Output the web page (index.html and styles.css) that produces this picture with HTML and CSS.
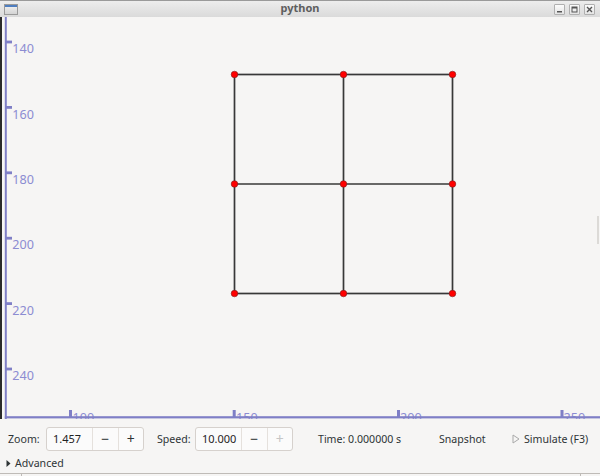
FILE: index.html
```html
<!DOCTYPE html>
<html>
<head>
<meta charset="utf-8">
<link rel="stylesheet" href="styles.css">
</head>
<body>
<div class="window">
  <header class="titlebar">
    <div class="tb-left">
      <span class="app-icon"><span class="app-icon-bar"></span></span>
    </div>
    <div class="title">python</div>
    <div class="tb-right">
      <span class="wm-btn"><svg width="7" height="7" viewBox="0 0 7 7"><rect x="1" y="5" width="5" height="1.5" fill="#555"/></svg></span>
      <span class="wm-btn"><svg width="7" height="7" viewBox="0 0 7 7"><rect x="1" y="1" width="5" height="5" fill="none" stroke="#555" stroke-width="1"/><rect x="1" y="1" width="5" height="1.5" fill="#555"/></svg></span>
      <span class="wm-btn"><svg width="7" height="7" viewBox="0 0 7 7"><path d="M1 1 L6 6 M6 1 L1 6" stroke="#555" stroke-width="1.4"/></svg></span>
    </div>
  </header>

  <main class="plot">
    <svg class="plot-svg" width="598" height="402" viewBox="2 17 598 402">
      <rect x="2" y="17" width="598" height="402" fill="#f6f5f4"/>
      <g class="yticks" fill="#7f7fc6">
        <rect x="6" y="40.6" width="6" height="2.8"/>
        <rect x="6" y="106" width="6" height="2.8"/>
        <rect x="6" y="171.4" width="6" height="2.8"/>
        <rect x="6" y="236.8" width="6" height="2.8"/>
        <rect x="6" y="302.2" width="6" height="2.8"/>
        <rect x="6" y="367.6" width="6" height="2.8"/>
      </g>
      <g class="axis-label">
        <text x="12.3" y="53.2">140</text>
        <text x="12.3" y="118.6">160</text>
        <text x="12.3" y="184">180</text>
        <text x="12.3" y="249.4">200</text>
        <text x="12.3" y="314.8">220</text>
        <text x="12.3" y="380.2">240</text>
      </g>
      <g class="axis-label">
        <text x="72.5" y="421.5">100</text>
        <text x="236" y="421.5">150</text>
        <text x="400" y="421.5">200</text>
        <text x="563.5" y="421.5">250</text>
      </g>
      <g fill="#7f7fc6">
        <rect x="69" y="410" width="3" height="7"/>
        <rect x="232.7" y="410" width="3" height="7"/>
        <rect x="397" y="410" width="3" height="7"/>
        <rect x="560.5" y="410" width="3" height="7"/>
      </g>
      <rect x="4.8" y="17" width="2" height="402" fill="#7f7fc6"/>
      <rect x="4.8" y="416.2" width="596" height="2.2" fill="#7f7fc6"/>

      <g stroke="#383838" stroke-width="1.7" fill="none">
        <rect x="234.5" y="74.5" width="218" height="219"/>
        <line x1="343.5" y1="74.5" x2="343.5" y2="293.5"/>
        <line x1="234.5" y1="184" x2="452.5" y2="184"/>
      </g>
      <g fill="#ff0000" stroke="#7a2020" stroke-width="0.6">
        <circle cx="234.5" cy="74.5" r="3.3"/>
        <circle cx="343.5" cy="74.5" r="3.3"/>
        <circle cx="452.5" cy="74.5" r="3.3"/>
        <circle cx="234.5" cy="184" r="3.3"/>
        <circle cx="343.5" cy="184" r="3.3"/>
        <circle cx="452.5" cy="184" r="3.3"/>
        <circle cx="234.5" cy="293.5" r="3.3"/>
        <circle cx="343.5" cy="293.5" r="3.3"/>
        <circle cx="452.5" cy="293.5" r="3.3"/>
      </g>
    </svg>
    <div class="scroll-hint"></div>
  </main>

  <div class="toolbar">
    <span class="lbl lbl-zoom">Zoom:</span>
    <div class="spin">
      <span class="spin-entry">1.457</span>
      <span class="spin-btn">−</span>
      <span class="spin-btn">+</span>
    </div>
    <span class="lbl lbl-speed">Speed:</span>
    <div class="spin">
      <span class="spin-entry">10.000</span>
      <span class="spin-btn">−</span>
      <span class="spin-btn disabled">+</span>
    </div>
    <span class="lbl lbl-time">Time: 0.000000 s</span>
    <span class="lbl lbl-snap">Snapshot</span>
    <span class="lbl lbl-sim"><svg class="play" width="8" height="10" viewBox="0 0 8 10"><path d="M1 1 L7 5 L1 9 Z" fill="none" stroke="#a9a9a9" stroke-width="1"/></svg>Simulate (F3)</span>
  </div>

  <div class="advanced">
    <svg class="expander" width="5" height="7" viewBox="0 0 5 7"><path d="M0.5 0 L4.5 3.5 L0.5 7 Z" fill="#2e3436"/></svg>
    <span>Advanced</span>
  </div>

  <div class="bottom-strip">
    <span class="seg seg-a"></span>
    <span class="seg seg-b"></span>
  </div>
</div>
</body>
</html>
```

FILE: styles.css
```css
html, body {
  margin: 0;
  padding: 0;
  background: #f6f5f4;
}

body {
  width: 600px;
  height: 476px;
  overflow: hidden;
  font-family: "Noto Sans", "DejaVu Sans", sans-serif;
  color: #2e3436;
}

.window {
  width: 600px;
  height: 476px;
  display: flex;
  flex-direction: column;
  background: #f6f5f4;
}

/* title bar */
.titlebar {
  height: 16px;
  flex: none;
  display: grid;
  grid-template-columns: 1fr auto 1fr;
  align-items: center;
  background: linear-gradient(#ededed, #dadada);
  border-top: 1px solid #9a9a9a;
  box-sizing: content-box;
}

.tb-left {
  display: flex;
  align-items: center;
  padding-left: 4px;
}

.app-icon {
  width: 12px;
  height: 9px;
  border: 1px solid #9a9a9a;
  background: linear-gradient(#f2f2f2, #d4d4d4);
  display: flex;
  flex-direction: column;
  box-sizing: content-box;
}

.app-icon-bar {
  height: 2px;
  background: #4e7ec0;
}

.title {
  font-weight: bold;
  font-size: 11px;
  color: #5e5e5e;
  line-height: 16px;
  transform: translateY(-1px);
}

.tb-right {
  display: flex;
  justify-content: flex-end;
  gap: 4px;
  padding-right: 5px;
}

.wm-btn {
  width: 9px;
  height: 9px;
  border: 1px solid #b0b0b0;
  border-radius: 1px;
  background: linear-gradient(#fbfbfb, #e4e4e4);
  display: flex;
  align-items: center;
  justify-content: center;
}

/* plot */
.plot {
  position: relative;
  height: 402px;
  flex: none;
  border-left: 2px solid #2a2a2a;
}

.plot-svg {
  display: block;
}

.axis-label {
  font-family: "Noto Sans", "DejaVu Sans", sans-serif;
  font-size: 12.6px;
  fill: #8c8cd2;
}

.scroll-hint {
  position: absolute;
  right: 1px;
  top: 199px;
  width: 2px;
  height: 28px;
  background: #dcdad7;
}

/* toolbar */
.toolbar {
  height: 34px;
  flex: none;
  display: flex;
  align-items: flex-start;
  padding-top: 8px;
  box-sizing: border-box;
  font-size: 10.6px;
}

.lbl {
  line-height: 24px;
  white-space: nowrap;
  flex: none;
}

.lbl-zoom { margin-left: 8px; width: 38px; }
.lbl-speed { margin-left: 13px; width: 38px; }
.lbl-time { margin-left: 25px; width: 121px; }
.lbl-snap { width: 73px; }
.lbl-sim { display: flex; align-items: center; }

.play {
  margin-right: 4px;
}

.spin {
  display: flex;
  flex: none;
  width: 98px;
  height: 24px;
  border: 1px solid #d6d1cd;
  border-radius: 3px;
  background: #fbfbfb;
  box-sizing: border-box;
}

.spin-entry {
  width: 45px;
  padding-left: 6px;
  box-sizing: border-box;
  line-height: 22px;
  font-size: 11px;
  color: #1f2324;
}

.spin-btn {
  flex: 1;
  border-left: 1px solid #e5e1dd;
  text-align: center;
  font-size: 14px;
  line-height: 21px;
  color: #2e3436;
}

.spin-btn.disabled {
  color: #c6c6c6;
}

/* advanced expander */
.advanced {
  height: 20px;
  flex: none;
  display: flex;
  align-items: center;
  gap: 4px;
  padding-left: 6px;
  font-size: 10.6px;
}

.bottom-strip {
  flex: 1;
  display: flex;
  border-top: 1px solid #bfbbb7;
}

.seg {
  width: 1px;
  background: #bfbbb7;
}

.seg-a { margin-left: 21px; }
.seg-b { margin-left: 558px; }
```
